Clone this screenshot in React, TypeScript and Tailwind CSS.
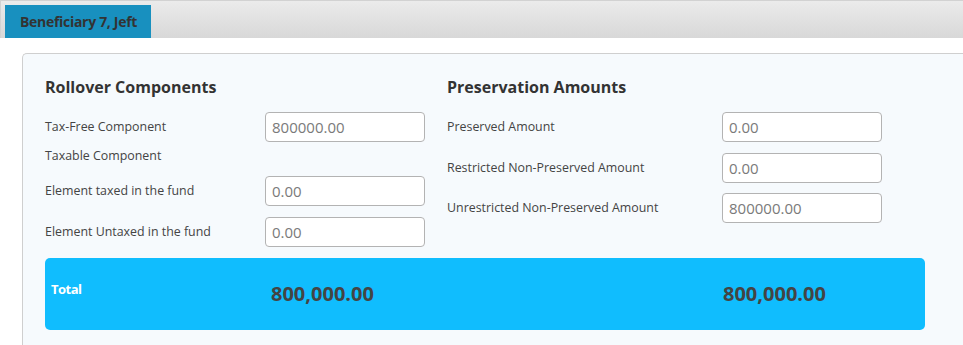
import React from "react";

function Field({ value }: { value: string }) {
  return (
    <div className="w-[160px] h-[30px] bg-white border border-[#b3b3b3] rounded-[4px] flex items-center pl-[6px] text-[15px] text-[#7a7a7a]">
      {value}
    </div>
  );
}

export default function App() {
  return (
    <div
      className="w-[963px] h-[345px] bg-white overflow-hidden"
      style={{ fontFamily: "'Open Sans', Lato, sans-serif" }}
    >
      <div className="h-[38px] border-t border-l border-[#d2d2d2] bg-gradient-to-b from-[#ebebeb] to-[#d8d8d8] pl-[4px] pt-[4px]">
        <div className="w-[146px] h-[33px] bg-[#1890bf] flex items-center pl-[15px] text-[14px] font-bold text-[#333] tracking-[-0.3px]">
          Beneficiary 7, Jeft
        </div>
      </div>
      <div className="mt-[15px] ml-[22px] h-[320px] border-t border-l border-[#cfcfcf] rounded-tl-[5px] bg-[#f6fafd] pl-[22px] pt-[23px]">
        <div className="flex">
          <div className="w-[402px] flex flex-col">
            <div className="h-[20px] mb-[15px] flex items-center text-[16px] font-bold text-[#333]">
              Rollover Components
            </div>
            <div className="flex items-center h-[30px]">
              <div className="w-[220px] text-[12.4px] text-[#444]">Tax-Free Component</div>
              <Field value="800000.00" />
            </div>
            <div className="flex items-center h-[24px] mt-[2px] mb-[8px] text-[12.4px] text-[#444]">
              Taxable Component
            </div>
            <div className="flex items-center h-[30px]">
              <div className="w-[220px] text-[12.4px] text-[#444]">Element taxed in the fund</div>
              <Field value="0.00" />
            </div>
            <div className="flex items-center h-[30px] mt-[11px]">
              <div className="w-[220px] text-[12.4px] text-[#444]">Element Untaxed in the fund</div>
              <Field value="0.00" />
            </div>
          </div>
          <div className="w-[435px] flex flex-col">
            <div className="h-[20px] mb-[15px] flex items-center text-[16px] font-bold text-[#333]">
              Preservation Amounts
            </div>
            <div className="flex items-center h-[30px]">
              <div className="w-[275px] text-[12.4px] text-[#444]">Preserved Amount</div>
              <Field value="0.00" />
            </div>
            <div className="flex items-center h-[30px] mt-[11px]">
              <div className="w-[275px] text-[12.4px] text-[#444]">Restricted Non-Preserved Amount</div>
              <Field value="0.00" />
            </div>
            <div className="flex items-center h-[30px] mt-[10px]">
              <div className="w-[275px] text-[12.4px] text-[#444]">Unrestricted Non-Preserved Amount</div>
              <Field value="800000.00" />
            </div>
          </div>
        </div>
        <div className="mt-[11px] w-[880px] h-[72px] bg-[#10bdfe] rounded-[5px] flex items-center">
          <div className="w-[226px] pl-[6px] mb-[8px] text-[13px] font-bold text-white tracking-[-0.5px]">Total</div>
          <div className="w-[452px] text-[20px] font-bold text-[#444]">800,000.00</div>
          <div className="text-[20px] font-bold text-[#444]">800,000.00</div>
        </div>
      </div>
    </div>
  );
}
